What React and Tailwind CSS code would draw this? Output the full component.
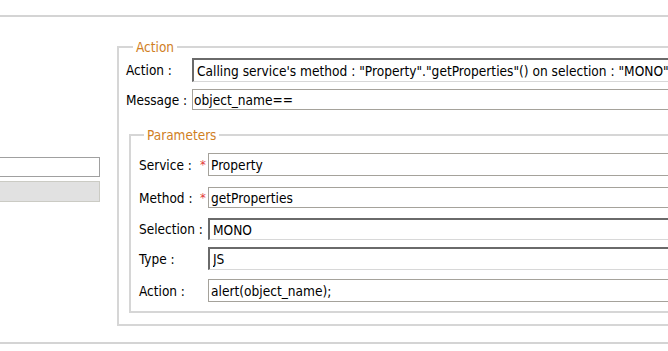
import React from "react";

const font = { fontFamily: '"DejaVu Sans Condensed", "Liberation Sans", sans-serif' };

function Field({ value, dark, pad = "pl-[2px]", h = "h-[23px]" }) {
  const border = dark
    ? "border-t-2 border-l-2 border-r border-b border-t-[#6a6a6a] border-l-[#6a6a6a] border-r-[#d8d8d8] border-b-[#d8d8d8]"
    : "border border-[#a5a29b]";
  return (
    <input
      readOnly
      value={value}
      className={`${h} ${border} ${pad} min-w-0 flex-1 bg-white text-[13.6px] text-black outline-none`}
      style={font}
    />
  );
}

function ParamRow({ label, value, required, dark, mt, h, pad }) {
  return (
    <div className={`flex items-center ${mt}`}>
      <span className="w-[61px] shrink-0 whitespace-nowrap text-[13.5px] leading-[16px] text-black">{label}</span>
      <span className="w-[8px] shrink-0 text-[13px] leading-[12px] text-[#e23b3b]">
        {required ? "*" : ""}
      </span>
      <Field value={value} dark={dark} h={h} pad={pad} />
    </div>
  );
}

export default function App() {
  return (
    <div className="h-[351px] w-[668px] overflow-hidden bg-white" style={font}>
      <div className="h-[15px]" />
      <div className="h-[2px] w-full bg-[#d4d4d4]" />
      <div className="flex h-[325px]">
        {/* left column */}
        <div className="w-[100px] shrink-0 pt-[140px]">
          <div className="h-[20px] border border-l-0 border-[#a0a0a0] bg-white" />
          <div className="mt-[4px] h-[21px] border border-l-0 border-[#cbcbc4] bg-[#e1e1e1]" />
        </div>

        {/* action */}
        <fieldset className="ml-[17px] mt-[22px] w-[640px] shrink-0 self-start border-2 border-[#d6d6d6] pb-[11px] pl-[7px]">
          <legend className="ml-[7px] px-[3px] text-[13.5px] leading-[16px] text-[#d0801f]">Action</legend>

          <div className="mt-[3px] flex items-center">
            <span className="w-[66px] shrink-0 whitespace-nowrap text-[13.5px] leading-[16px] text-black">Action :</span>
            <Field
              dark
              h="h-[24px]"
              pad="pl-[3px]"
              value={`Calling service's method : "Property"."getProperties"() on selection : "MONO", type : "JS"`}
            />
          </div>
          <div className="mt-[7px] flex items-center">
            <span className="w-[66px] shrink-0 whitespace-nowrap text-[13.5px] leading-[16px] text-black">Message :</span>
            <Field h="h-[21px]" pad="pl-[1px]" value="object_name==" />
          </div>

          {/* parameters */}
          <fieldset className="ml-[3px] mt-[17px] border-2 border-[#d6d6d6] pb-[9px] pl-[8px]">
            <legend className="ml-[5px] px-[3px] text-[13.5px] leading-[16px] text-[#d0801f]">Parameters</legend>
            <ParamRow label="Service :" required value="Property" mt="mt-[10px]" h="h-[23px]" pad="pl-[2px]" />
            <ParamRow label="Method :" required value="getProperties" mt="mt-[11px]" h="h-[21px]" pad="pl-[2px]" />
            <ParamRow label="Selection :" dark value="MONO" mt="mt-[10px]" h="h-[22px]" pad="pl-[3px]" />
            <ParamRow label="Type :" dark value="JS" mt="mt-[7px]" h="h-[23px]" pad="pl-[3px]" />
            <ParamRow label="Action :" value="alert(object_name);" mt="mt-[9px]" h="h-[23px]" pad="pl-[2px]" />
          </fieldset>
        </fieldset>
      </div>
      <div className="h-[2px] w-full bg-[#d4d4d4]" />
    </div>
  );
}
